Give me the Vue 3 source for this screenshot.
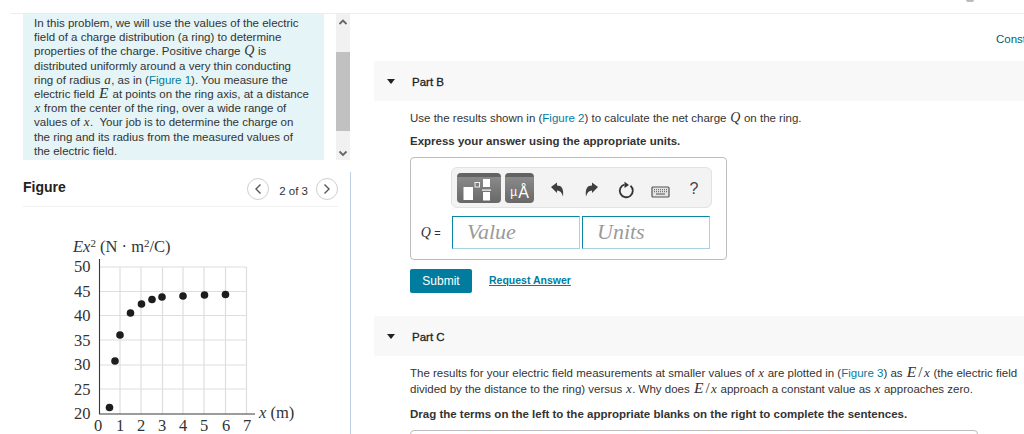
<script setup>
const xGrid = [120, 141, 162.5, 183, 204, 225.5, 246.5]
const yGrid = [267, 291.5, 315.5, 340, 365, 389]
const yLabels = [[50, 272], [45, 296.5], [40, 321], [35, 345.5], [30, 370], [25, 394.5], [20, 419]]
const xLabels = [[0, 98], [1, 120], [2, 141], [3, 162], [4, 183], [5, 204], [6, 226], [7, 247]]
const dots = [[109.5, 407.5], [115, 361], [120, 335], [130.5, 313], [141.5, 304], [152, 299.5], [162, 297], [183, 296], [204.5, 295], [225.5, 294.5]]
</script>

<template>
  <div class="page">
    <div class="top-mark"></div>
    <div class="rule"></div>
    <div class="cols">
      <aside class="left">
        <div class="intro">
          <div class="intro-box">
            <p>In this problem, we will use the values of the electric<br>field of a charge distribution (a ring) to determine<br>properties of the charge. Positive charge <i class="m big">Q</i> is<br>distributed uniformly around a very thin conducting<br>ring of radius <i class="m">a</i>, as in (<a>Figure 1</a>). You measure the<br>electric field <i class="m cap">E</i> at points on the ring axis, at a distance<br><i class="m">x</i> from the center of the ring, over a wide range of<br>values of <i class="m">x</i>.&nbsp; Your job is to determine the charge on<br>the ring and its radius from the measured values of<br>the electric field.</p>
          </div>
          <div class="scrollbar">
            <svg class="sb-arrow up" width="14" height="10" viewBox="0 0 14 10"><path d="M3.500 7 7 3.500 10.500 7" fill="none" stroke="#666" stroke-width="1.800"/></svg>
            <div class="sb-thumb"></div>
            <svg class="sb-arrow" width="14" height="10" viewBox="0 0 14 10"><path d="M3.500 3.500 7 7 10.500 3.500" fill="none" stroke="#666" stroke-width="1.800"/></svg>
          </div>
        </div>
        <section class="figure">
          <div class="fig-head">
            <h3>Figure</h3>
            <div class="pager">
              <button class="circle"><svg width="8" height="12" viewBox="0 0 8 12"><path d="M6.500 1.500 2 6l4.500 4.500" fill="none" stroke="#555" stroke-width="1.400"/></svg></button>
              <span>2 of 3</span>
              <button class="circle"><svg width="8" height="12" viewBox="0 0 8 12"><path d="M1.500 1.500 6 6l-4.500 4.500" fill="none" stroke="#555" stroke-width="1.400"/></svg></button>
            </div>
          </div>
        </section>
        <svg class="chart" width="350" height="434" viewBox="0 0 350 434">
          <g stroke="#dedede" stroke-width="1.200">
            <line v-for="x in xGrid" :key="x" :x1="x" :x2="x" y1="267" y2="414"/>
            <line v-for="y in yGrid" :key="y" x1="100" x2="246.500" :y1="y" :y2="y"/>
          </g>
          <path d="M99.500 259V414H255" fill="none" stroke="#3a3a3a" stroke-width="1.100"/>
          <text x="73" y="252" class="ct"><tspan font-style="italic">Ex</tspan><tspan dy="-5" font-size="11">2</tspan><tspan dy="5"> (N · m</tspan><tspan dy="-5" font-size="11">2</tspan><tspan dy="5">/C)</tspan></text>
          <text v-for="l in yLabels" :key="l[0]" x="74" :y="l[1]" class="ct">{{ l[0] }}</text>
          <text v-for="l in xLabels" :key="l[0]" :x="l[1]" y="430.500" class="ct" text-anchor="middle">{{ l[0] }}</text>
          <text x="259" y="418" class="ct"><tspan font-style="italic">x</tspan> (m)</text>
          <circle v-for="d in dots" :key="d[0]" :cx="d[0]" :cy="d[1]" r="3.800" fill="#1d1d1d"/>
        </svg>
      </aside>

      <main class="right">
        <div class="constants"><a>Constants</a></div>

        <div class="part-head"><span class="tri"></span><b>Part B</b></div>
        <div class="part-body">
          <p>Use the results shown in (<a>Figure 2</a>) to calculate the net charge <i class="m big">Q</i> on the ring.</p>
          <p class="strong first">Express your answer using the appropriate units.</p>

          <div class="answer">
            <div class="toolbar">
              <div class="tbtn wide">
                <svg width="44" height="30" viewBox="0 0 44 30">
                  <rect x="6.500" y="14" width="9.500" height="13" fill="#fff"/>
                  <rect x="18" y="9.500" width="4.500" height="4.500" fill="none" stroke="#eee"/>
                  <rect x="26" y="6" width="7" height="8" fill="#fff"/>
                  <rect x="25" y="16.500" width="9" height="1.200" fill="#fff"/>
                  <rect x="26" y="19" width="7" height="8.500" fill="#fff"/>
                </svg>
              </div>
              <div class="tbtn units"><span class="mu">µ</span><span class="ang">Å</span></div>
              <svg class="tool t1" width="24" height="24" viewBox="0 0 24 24"><path d="M6 11 12 6.500V9.500C16.500 9.500 19 12.500 18 20.500 17 16.500 15 14.500 12 14.500V17Z" fill="#3f3f3f"/></svg>
              <svg class="tool t2" width="24" height="24" viewBox="0 0 24 24"><path d="M18 11 12 6.500V9.500C7.500 9.500 5 12.500 6 20.500 7 16.500 9 14.500 12 14.500V17Z" fill="#3f3f3f"/></svg>
              <svg class="tool t3" width="24" height="24" viewBox="0 0 24 24"><path d="M10.500 8.500A6.500 6.500 0 1 0 16.500 9.800" fill="none" stroke="#333" stroke-width="1.800"/><path d="M10.500 5.800 15 9 10.500 12Z" fill="#333"/></svg>
              <svg class="tool kb" width="20" height="14" viewBox="0 0 20 14"><rect x="2" y="1" width="17" height="10" rx="1" fill="#e4e4e4" stroke="#555" stroke-width="1.200"/><path d="M4 3.700h13M4 5.700h13" stroke="#555" stroke-dasharray="1 1"/><path d="M6 8h9" stroke="#555"/></svg>
              <span class="help">?</span>
            </div>
            <div class="entry">
              <span class="qlabel"><i class="m big">Q</i> =</span>
              <div class="field">Value</div>
              <div class="field">Units</div>
            </div>
          </div>

          <div class="actions">
            <button class="submit">Submit</button>
            <a class="req">Request Answer</a>
          </div>
        </div>

        <div class="part-head c"><span class="tri"></span><b>Part C</b></div>
        <div class="part-body">
          <p class="tall">The results for your electric field measurements at smaller values of <i class="m">x</i> are plotted in (<a>Figure 3</a>) as <i class="m cap">E</i><span class="m slash">/</span><i class="m">x</i> (the electric field<br>divided by the distance to the ring) versus <i class="m">x</i>. Why does <i class="m cap">E</i><span class="m slash">/</span><i class="m">x</i> approach a constant value as <i class="m">x</i> approaches zero.</p>
          <p class="strong second">Drag the terms on the left to the appropriate blanks on the right to complete the sentences.</p>
          <div class="drag-box"></div>
        </div>
      </main>
    </div>
  </div>
</template>

<style>
html, body { margin: 0; background: #fff; overflow: hidden; }
</style>

<style scoped>
.page {
  position: relative;
  width: 1024px;
  height: 434px;
  overflow: hidden;
  padding-top: 13px;
  box-sizing: border-box;
  font-family: "Liberation Sans", Arial, sans-serif;
  font-size: 11.500px;
  color: #333;
}
.top-mark { position: absolute; left: 966px; top: 0; width: 8px; height: 2px; background: #bbb; border-radius: 0 0 3px 3px; }
.rule { height: 1px; margin-left: 11px; background: #ececec; }
.cols { display: flex; }
.left { position: relative; width: 351px; flex: none; }
.intro { display: flex; padding-left: 23px; }
.intro-box { width: 301px; height: 146px; background: #e5f4f6; box-sizing: border-box; padding: 2px 0 0 11px; }
.intro-box p { margin: 0; line-height: 14.200px; white-space: nowrap; }
a { color: #007d9e; }
.m { font-family: "Liberation Serif", serif; font-style: italic; font-size: 13px; line-height: 1px; padding: 0 0.500px; }
.m.big { font-size: 14px; }
.m.cap { font-size: 15.500px; padding: 0 1px; }
.m.slash { font-size: 15px; font-style: normal; padding: 0 1px; }
.scrollbar { width: 14px; margin-left: 12px; height: 146px; background: #f1f1f1; display: flex; flex-direction: column; align-items: center; }
.sb-arrow { display: block; flex: none; }
.sb-arrow.up { margin-top: 3px; }
.sb-thumb { width: 14px; height: 79px; margin: 25px 0 17px; background: #c1c1c1; }
.figure { margin-top: 12px; height: 262px; border-right: 1px solid #bfd0e0; padding-left: 23px; padding-right: 12px; }
.fig-head { height: 35px; display: flex; align-items: center; justify-content: space-between; border-bottom: 1px solid #f0f0f0; box-sizing: border-box; }
.fig-head h3 { margin: 0 0 5px; font-size: 14px; font-weight: 700; color: #222; }
.pager { display: flex; align-items: center; color: #333; }
.pager span { padding-top: 3px; margin: 0 8px 0 10px; }
.circle { width: 22px; height: 22px; border: 1px solid #cfcfcf; border-radius: 50%; background: #fff; padding: 0; display: flex; align-items: center; justify-content: center; }
.chart { position: absolute; left: 0; top: -14px; pointer-events: none; }
.ct { font-family: "Liberation Serif", serif; font-size: 16.500px; fill: #333; }

.right { flex: 1; min-width: 0; padding-left: 23px; }
.constants { height: 47px; padding: 19px 0 0 622px; box-sizing: border-box; white-space: nowrap; line-height: 12px; }
.constants a { color: #005f73; }
.part-head { height: 40px; background: #f8f8f8; display: flex; align-items: center; color: #222; }
.part-head b { font-weight: 400; -webkit-text-stroke: 0.300px #222; margin-left: 17px; padding-top: 1px; }
.tri { width: 0; height: 0; margin-left: 13px; border: 4.500px solid transparent; border-top: 5px solid #222; border-bottom: 0; }
.part-body { padding-left: 36px; }
.part-body p { margin: 0; line-height: 14px; white-space: nowrap; }
.part-body > p:first-child { padding-top: 10px; }
.part-body > p.tall { line-height: 16px; padding-top: 9px; }
.strong { font-weight: 700; }
.strong.first { margin-top: 9px !important; }
.strong.second { margin-top: 10px !important; }
.answer { width: 317px; height: 103px; margin-top: 9px; box-sizing: border-box; border: 1px solid #bdbdbd; border-radius: 4px; padding: 9px 14px 0 40px; }
.toolbar { width: 261px; height: 41px; box-sizing: border-box; border: 1px solid #e2e2e2; border-radius: 6px; background: #f3f3f3; display: flex; align-items: center; padding-left: 5px; }
.tbtn { height: 30px; flex: none; border-radius: 4px; border-top: 4px solid #636363; box-sizing: border-box; background: linear-gradient(#8a8a8a, #686868); color: #fff; }
.tbtn.wide { width: 44px; margin-right: 4px; }
.tbtn.wide svg { display: block; margin-top: -4px; }
.tbtn.units { width: 29px; display: flex; align-items: flex-end; justify-content: center; gap: 1px; padding-bottom: 1px; line-height: 19px; }
.mu { font-size: 12px; font-weight: 400; }
.ang { font-size: 16px; }
.tool { flex: none; }
.t1 { margin-left: 11px; }
.t2 { margin-left: 11px; }
.t3 { margin-left: 10px; }
.kb { margin: 10px 0 0 12px; }
.help { font-size: 16px; color: #444; margin: 3px 0 0 19.500px; }
.entry { display: flex; align-items: center; margin-top: 8px; gap: 2px; margin-left: -1px; }
.qlabel { width: 41px; margin-left: -40px; margin-right: -1px; text-align: center; font-size: 11px; }
.field { width: 128px; height: 33px; box-sizing: border-box; border-top: 1px solid #0b87a6; border-left: 1px solid #0b87a6; border-right: 1px solid #a6d3de; border-bottom: 1px solid #a6d3de; padding-left: 14px; font-family: "Liberation Serif", serif; font-style: italic; font-size: 22px; line-height: 30px; color: #9a9a9a; }
.actions { display: flex; align-items: center; margin-top: 9px; }
.submit { width: 62px; height: 24px; border: 0; border-radius: 2px; background: #007d9e; color: #fff; font: 12px "Liberation Sans", Arial, sans-serif; padding: 0; }
.req { margin-left: 17px; margin-bottom: 2px; font-weight: 700; text-decoration: underline; color: #007d9e; font-size: 10.500px; }
.part-head.c { margin-top: 23px; }
.drag-box { width: 568px; height: 20px; margin-top: 9px; box-sizing: border-box; border: 1px solid #bdbdbd; border-radius: 4px; }
</style>
